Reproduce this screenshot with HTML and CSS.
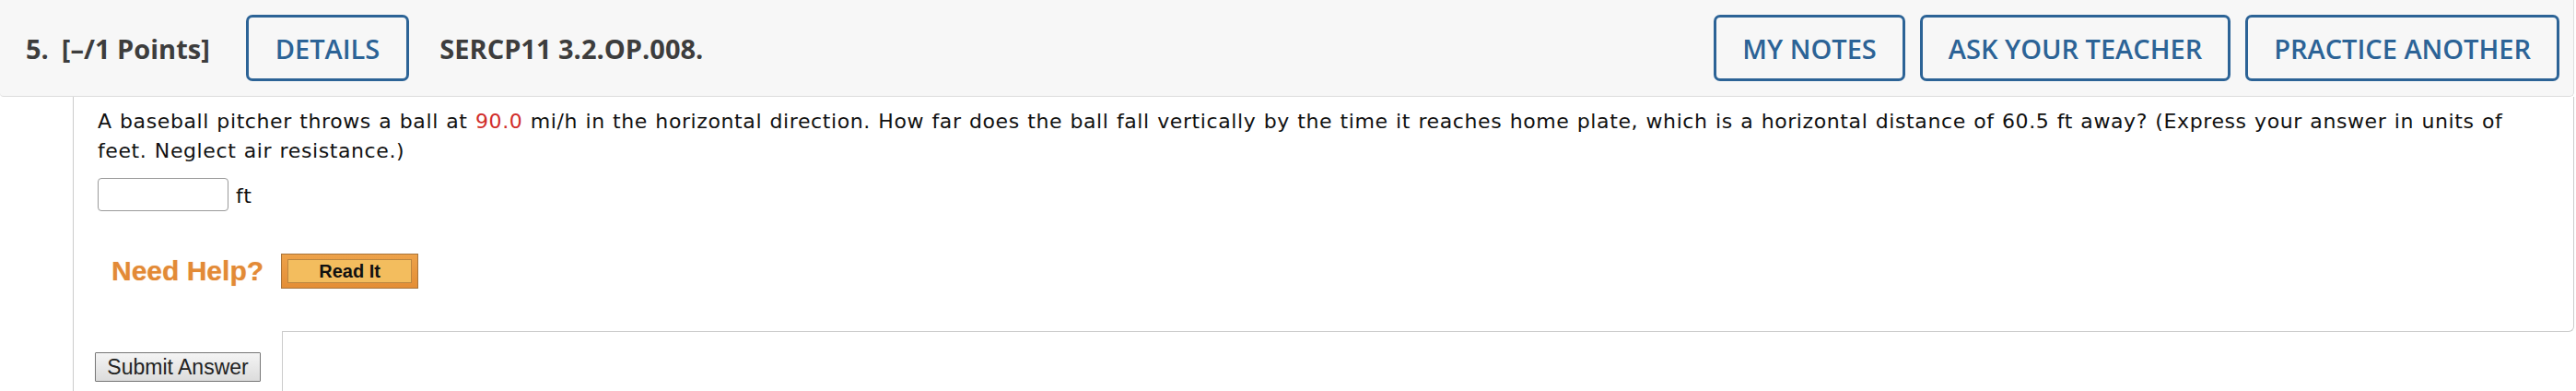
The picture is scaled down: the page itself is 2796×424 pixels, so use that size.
FILE: index.html
```html
<!DOCTYPE html>
<html lang="en">
<head>
<meta charset="utf-8">
<title>Question 5</title>
<link rel="stylesheet" href="styles.css">
</head>
<body>
<div class="question">
  <header class="qhead">
    <span class="qnum">5.</span>
    <span class="qpts">[–/1 Points]</span>
    <button class="hbtn details">DETAILS</button>
    <span class="qcode">SERCP11 3.2.OP.008.</span>
    <div class="actions">
      <button class="hbtn">MY NOTES</button>
      <button class="hbtn">ASK YOUR TEACHER</button>
      <button class="hbtn">PRACTICE ANOTHER</button>
    </div>
  </header>
  <div class="qbody">
    <p class="qtext">A baseball pitcher throws a ball at <span class="val">90.0</span> mi/h in the horizontal direction. How far does the ball fall vertically by the time it reaches home plate, which is a horizontal distance of 60.5 ft away? (Express your answer in units of feet. Neglect air resistance.)</p>
    <div class="answer">
      <input class="ans-input" type="text" aria-label="answer">
      <span class="unit">ft</span>
    </div>
    <div class="help">
      <span class="need">Need Help?</span>
      <button class="readit"><span class="readit-in">Read It</span></button>
    </div>
  </div>
  <div class="submit-tab">
    <button class="submit">Submit Answer</button>
  </div>
</div>
</body>
</html>
```
FILE: styles.css
```css
html, body {
  margin: 0;
  padding: 0;
  background: #ffffff;
}

.question {
  width: 2794px;
}

.qhead {
  box-sizing: border-box;
  height: 105px;
  display: flex;
  align-items: center;
  padding: 0 15px 0 28px;
  background: #f7f7f7;
  border-right: 1px solid #dddddd;
  border-bottom: 1px solid #dddddd;
  border-bottom-right-radius: 5px;
  border-bottom-left-radius: 4px;
  font-family: "Open Sans", "Liberation Sans", sans-serif;
  font-size: 29px;
  font-weight: 700;
  color: #3d3d3d;
}

.qpts {
  margin-left: 14px;
}

.hbtn {
  box-sizing: border-box;
  height: 72px;
  padding: 0 29px;
  border: 3px solid #2c6396;
  border-radius: 7px;
  background: transparent;
  color: #2c6396;
  font-family: "Open Sans", "Liberation Sans", sans-serif;
  font-size: 29px;
  font-weight: 600;
  line-height: 1;
}

.details {
  margin-left: 39px;
}

.qcode {
  margin-left: 33px;
}

.actions {
  margin-left: auto;
  display: flex;
  gap: 16px;
}

.actions .hbtn {
  padding: 0 28px;
}

.qbody {
  margin-left: 79px;
  padding: 11px 26px 46px 26px;
  border-left: 1px solid #cccccc;
  border-right: 1px solid #cccccc;
  border-bottom: 1px solid #cccccc;
  border-bottom-right-radius: 6px;
  font-family: "DejaVu Sans", Verdana, sans-serif;
  font-size: 22px;
  color: #111111;
}

.qtext {
  margin: 0;
  line-height: 32px;
  letter-spacing: 0.6px;
  word-spacing: 0.8px;
}

.val {
  color: #d12d2a;
}

.answer {
  margin-top: 13px;
  display: flex;
  align-items: center;
  gap: 8px;
}

.ans-input {
  box-sizing: border-box;
  width: 142px;
  height: 36px;
  margin: 0;
  border: 1px solid #9a9a9a;
  border-radius: 4px;
  background: #ffffff;
}

.unit {
  font-size: 22px;
  margin-top: 2px;
  letter-spacing: 1px;
}

.help {
  margin-top: 46px;
  padding-left: 15px;
  display: flex;
  align-items: center;
  gap: 19px;
}

.need {
  font-family: "Liberation Sans", Arial, sans-serif;
  font-weight: 700;
  font-size: 30px;
  color: #e38a36;
  text-shadow: 0 0 1px rgba(227, 138, 54, 0.6);
}

.readit {
  box-sizing: border-box;
  width: 149px;
  height: 38px;
  padding: 5px 6px;
  border: 1px solid #a8733a;
  background: linear-gradient(#eda24a, #e48e36);
  display: flex;
}

.readit-in {
  flex: 1;
  border: 1px solid #bb8640;
  background: #f3bd5e;
  font-family: "Liberation Sans", Arial, sans-serif;
  font-weight: 700;
  font-size: 20px;
  color: #111111;
  display: flex;
  align-items: center;
  justify-content: center;
}

.submit-tab {
  margin-left: 79px;
  margin-top: -1px;
  width: 228px;
  box-sizing: border-box;
  padding: 23px 0 30px 23px;
  background: #ffffff;
  border-left: 1px solid #cccccc;
  border-right: 1px solid #cccccc;
}

.submit {
  box-sizing: border-box;
  width: 180px;
  height: 32px;
  padding: 0;
  border: 1px solid #767676;
  border-radius: 1px;
  background: linear-gradient(#f4f4f4, #dcdcdc);
  font-family: "Liberation Sans", Arial, sans-serif;
  font-size: 23px;
  color: #222222;
}
```
